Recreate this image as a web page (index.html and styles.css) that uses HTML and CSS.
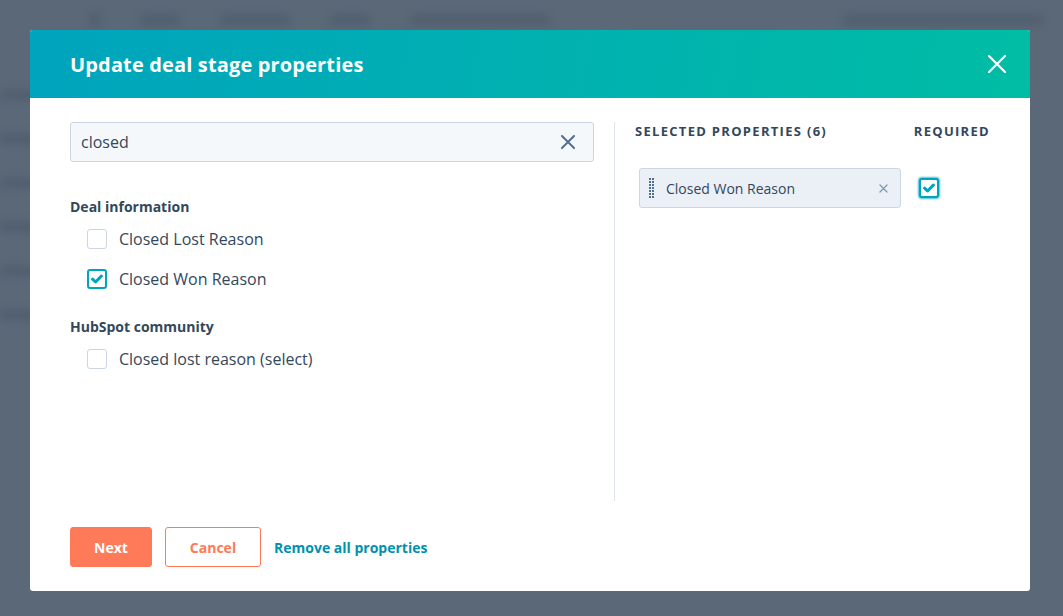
FILE: index.html
```html
<!DOCTYPE html>
<html>
<head>
	<meta charset="utf-8">
	<title>Update deal stage properties</title>
	<link rel="stylesheet" href="styles.css">
</head>
<body>

	<!-- page behind the overlay -->
	<div class="page">
		<div class="page-nav">
			<span class="ghost g-icon"></span>
			<span class="ghost g-s"></span>
			<span class="ghost g-m"></span>
			<span class="ghost g-s"></span>
			<span class="ghost g-l"></span>
			<span class="spacer"></span>
			<span class="ghost g-xl"></span>
		</div>
		<div class="page-side">
			<span class="ghost g-m"></span>
			<span class="ghost g-s"></span>
			<span class="ghost g-m"></span>
			<span class="ghost g-s"></span>
			<span class="ghost g-s"></span>
			<span class="ghost g-m"></span>
		</div>
	</div>

	<div class="modal">
		<div class="modal-header">
			<h1 class="modal-title">Update deal stage properties</h1>
			<svg class="modal-close" width="18" height="18" viewBox="0 0 18 18">
				<path d="M1 1 L17 17 M17 1 L1 17" stroke="#fff" stroke-width="2.2" stroke-linecap="round"/>
			</svg>
		</div>

		<div class="modal-body">
			<div class="col-left">
				<div class="search">
					<span class="search-text">closed</span>
					<svg class="search-clear" width="14" height="14" viewBox="0 0 14 14">
						<path d="M1 1 L13 13 M13 1 L1 13" stroke="#516f90" stroke-width="2" stroke-linecap="round"/>
					</svg>
				</div>

				<div class="group-title first">Deal information</div>
				<label class="option"><span class="box"></span>Closed Lost Reason</label>
				<label class="option"><span class="box checked">
					<svg width="12" height="10" viewBox="0 0 12 10"><path d="M1.6 5.2 L4.6 8 L10.4 2" fill="none" stroke="#00a4bd" stroke-width="3" stroke-linecap="round" stroke-linejoin="round"/></svg>
				</span>Closed Won Reason</label>

				<div class="group-title">HubSpot community</div>
				<label class="option"><span class="box"></span>Closed lost reason (select)</label>
			</div>

			<div class="col-right">
				<div class="selected-head">
					<span>Selected properties (6)</span>
					<span>Required</span>
				</div>
				<div class="selected-row">
					<div class="chip">
						<svg class="grip" width="5" height="20" viewBox="0 0 5 20">
							<g fill="#516f90">
								<rect x="0" y="0" width="2" height="2"/><rect x="3" y="0" width="2" height="2"/>
								<rect x="0" y="3" width="2" height="2"/><rect x="3" y="3" width="2" height="2"/>
								<rect x="0" y="6" width="2" height="2"/><rect x="3" y="6" width="2" height="2"/>
								<rect x="0" y="9" width="2" height="2"/><rect x="3" y="9" width="2" height="2"/>
								<rect x="0" y="12" width="2" height="2"/><rect x="3" y="12" width="2" height="2"/>
								<rect x="0" y="15" width="2" height="2"/><rect x="3" y="15" width="2" height="2"/>
								<rect x="0" y="18" width="2" height="2"/><rect x="3" y="18" width="2" height="2"/>
							</g>
						</svg>
						<span class="chip-text">Closed Won Reason</span>
						<svg class="chip-remove" width="9" height="9" viewBox="0 0 9 9">
							<path d="M1 1 L8 8 M8 1 L1 8" stroke="#7c98b6" stroke-width="1.3" stroke-linecap="round"/>
						</svg>
					</div>
					<span class="box checked focus">
						<svg width="12" height="10" viewBox="0 0 12 10"><path d="M1.6 5.2 L4.6 8 L10.4 2" fill="none" stroke="#00a4bd" stroke-width="3" stroke-linecap="round" stroke-linejoin="round"/></svg>
					</span>
				</div>
			</div>
		</div>

		<div class="modal-footer">
			<button class="btn btn-primary">Next</button>
			<button class="btn btn-secondary">Cancel</button>
			<a class="link">Remove all properties</a>
		</div>
	</div>

</body>
</html>
```

FILE: styles.css
```css
body {
	margin: 0;
	width: 1063px;
	height: 616px;
	overflow: hidden;
	background: #5a6878;
	font-family: "Open Sans", "Noto Sans", sans-serif;
	color: #33475b;
	position: relative;
}

/* blurred page behind */
.page {
	filter: blur(4px);
	opacity: 0.35;
}
.page-nav {
	display: flex;
	align-items: center;
	gap: 40px;
	height: 40px;
	padding: 0 20px 0 90px;
}
.page-side {
	display: flex;
	flex-direction: column;
	gap: 34px;
	padding: 50px 0 0 0;
}
.ghost {
	display: block;
	height: 10px;
	background: #3e4c5c;
	border-radius: 4px;
}
.g-icon { width: 10px; height: 14px; }
.g-s { width: 40px; }
.g-m { width: 70px; }
.g-l { width: 140px; }
.g-xl { width: 200px; }
.spacer { flex: 1; }

/* modal */
.modal {
	position: absolute;
	left: 30px;
	top: 30px;
	width: 1000px;
	height: 561px;
	background: #fff;
	border-radius: 3px;
	overflow: hidden;
	display: flex;
	flex-direction: column;
}

.modal-header {
	height: 68px;
	flex: none;
	display: flex;
	align-items: center;
	justify-content: space-between;
	padding: 0 24px 0 40px;
	background: linear-gradient(100deg, #00a4bd 0%, #00bda5 100%);
}
.modal-title {
	margin: 0;
	font-size: 20px;
	font-weight: 700;
	letter-spacing: 0.15px;
	color: #fff;
}

.modal-body {
	display: flex;
	padding: 24px 40px 0 40px;
	height: 379px;
}

.col-left {
	width: 524px;
	flex: none;
	margin-right: 20px;
}

.search {
	height: 40px;
	box-sizing: border-box;
	border: 1px solid #cbd6e2;
	border-radius: 3px;
	background: #f5f8fa;
	display: flex;
	align-items: center;
	justify-content: space-between;
	padding: 0 18px 0 10px;
	font-size: 16px;
}

.group-title {
	font-size: 14px;
	font-weight: 700;
	line-height: 20px;
	margin: 18px 0 2px 0;
}
.group-title.first {
	margin-top: 35px;
}

.option {
	display: flex;
	align-items: center;
	height: 40px;
	padding-left: 17px;
	font-size: 16px;
}

.box {
	width: 20px;
	height: 20px;
	box-sizing: border-box;
	border: 1px solid #cbd6e2;
	border-radius: 3px;
	background: #fff;
	margin-right: 12px;
	display: flex;
	align-items: center;
	justify-content: center;
	flex: none;
}
.box.checked {
	border: 2px solid #00a4bd;
}
.box.focus {
	box-shadow: 0 0 2px 1px rgba(0, 164, 189, 0.7);
	margin: 0 0 0 18px;
}

.col-right {
	flex: 1;
	border-left: 1px solid #dfe3eb;
	padding-left: 20px;
}

.selected-head {
	display: flex;
	justify-content: space-between;
	font-size: 13px;
	font-weight: 700;
	line-height: 18px;
	letter-spacing: 1.3px;
	text-transform: uppercase;
}

.selected-row {
	display: flex;
	align-items: center;
	margin-top: 28px;
	padding-left: 4px;
}

.chip {
	width: 262px;
	height: 40px;
	box-sizing: border-box;
	border: 1px solid #cbd6e2;
	border-radius: 3px;
	background: #eaf0f6;
	display: flex;
	align-items: center;
	padding: 0 12px 0 9px;
	font-size: 14px;
}
.grip {
	margin-right: 12px;
	flex: none;
}
.chip-text {
	flex: 1;
}

.modal-footer {
	display: flex;
	align-items: center;
	gap: 13px;
	padding: 26px 40px 24px 40px;
}

.btn {
	height: 40px;
	border-radius: 3px;
	font-family: inherit;
	font-size: 14px;
	font-weight: 700;
	border: 1px solid #ff7a59;
}
.btn-primary {
	width: 82px;
	background: #ff7a59;
	color: #fff;
}
.btn-secondary {
	width: 96px;
	background: #fff;
	color: #ff7a59;
}
.link {
	color: #0091ae;
	font-size: 14px;
	font-weight: 700;
}
```
